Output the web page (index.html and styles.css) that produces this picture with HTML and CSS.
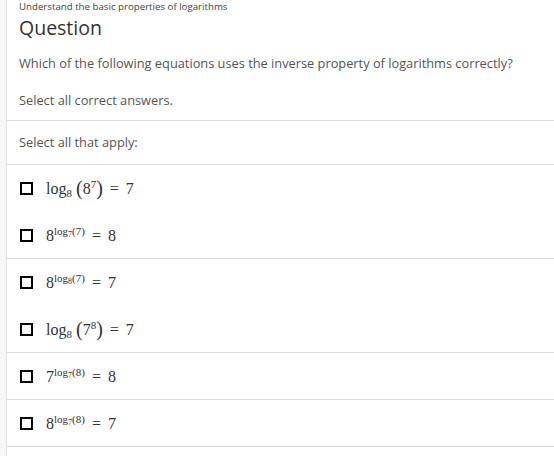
FILE: index.html
```html
<!DOCTYPE html>
<html lang="en">
<head>
    <meta charset="UTF-8">
    <title>Question</title>
    <link rel="stylesheet" href="styles.css">
</head>
<body>
    <div class="sheet">
        <div class="head">
            <div class="topic">Understand the basic properties of logarithms</div>
            <h1>Question</h1>
            <p class="ask">Which of the following equations uses the inverse property of logarithms correctly?</p>
            <p class="ask gap">Select all correct answers.</p>
        </div>

        <div class="apply">Select all that apply:</div>

        <div class="opt">
            <span class="box"></span>
            <span class="math">log<sub>8</sub> <span class="big">(</span>8<sup>7</sup><span class="big">)</span> <span class="eq">=</span> 7</span>
        </div>
        <div class="opt line">
            <span class="box"></span>
            <span class="math">8<sup class="hi">log<sub>7</sub>(7)</sup> <span class="eq">=</span> 8</span>
        </div>
        <div class="opt">
            <span class="box"></span>
            <span class="math">8<sup class="hi">log<sub>8</sub>(7)</sup> <span class="eq">=</span> 7</span>
        </div>
        <div class="opt line">
            <span class="box"></span>
            <span class="math">log<sub>8</sub> <span class="big">(</span>7<sup>8</sup><span class="big">)</span> <span class="eq">=</span> 7</span>
        </div>
        <div class="opt line">
            <span class="box"></span>
            <span class="math">7<sup class="hi">log<sub>7</sub>(8)</sup> <span class="eq">=</span> 8</span>
        </div>
        <div class="opt line">
            <span class="box"></span>
            <span class="math">8<sup class="hi">log<sub>7</sub>(8)</sup> <span class="eq">=</span> 7</span>
        </div>
    </div>
</body>
</html>
```

FILE: styles.css
```css
body
{
    margin: 0;
    background-color: #f6f6f6;
    font-family: "Open Sans", "Noto Sans", sans-serif;
    color: #555;
}

.sheet
{
    margin-left: 6px;
    min-height: 456px;
    background-color: white;
    border-left: 1px solid #e2e2e2;
}

.head
{
    padding: 0 0 11px 12px;
    border-bottom: 1px solid #dcdcdc;
}

.topic
{
    font-size: 9.7px;
    line-height: 14px;
    color: #444;
}

h1
{
    margin: 1px 0 0 0;
    font-size: 19.5px;
    line-height: 26px;
    font-weight: normal;
    color: #333;
}

.ask
{
    margin: 13px 0 0 0;
    font-size: 12.8px;
    line-height: 18px;
}

.ask.gap
{
    margin-top: 19px;
}

.apply
{
    height: 43px;
    line-height: 43px;
    padding-left: 12px;
    font-size: 12.8px;
    border-bottom: 1px solid #dcdcdc;
}

.opt
{
    height: 46px;
    display: flex;
    align-items: center;
    padding-left: 13px;
    border-bottom: 1px solid transparent;
}

.opt.line
{
    border-bottom-color: #dcdcdc;
}

.box
{
    width: 9px;
    height: 9px;
    border: 2px solid black;
    margin-right: 13px;
}

.math
{
    font-family: "Liberation Serif", "DejaVu Serif", serif;
    font-size: 16px;
    color: #333;
    white-space: nowrap;
}

.math sub
{
    font-size: 11px;
    vertical-align: -3px;
}

.math sup
{
    font-size: 11px;
    vertical-align: 6px;
}

.math sup.hi sub
{
    font-size: 8px;
    vertical-align: -2px;
}

.big
{
    font-size: 20px;
    vertical-align: -1px;
}

.eq
{
    margin: 0 3px;
}
```
